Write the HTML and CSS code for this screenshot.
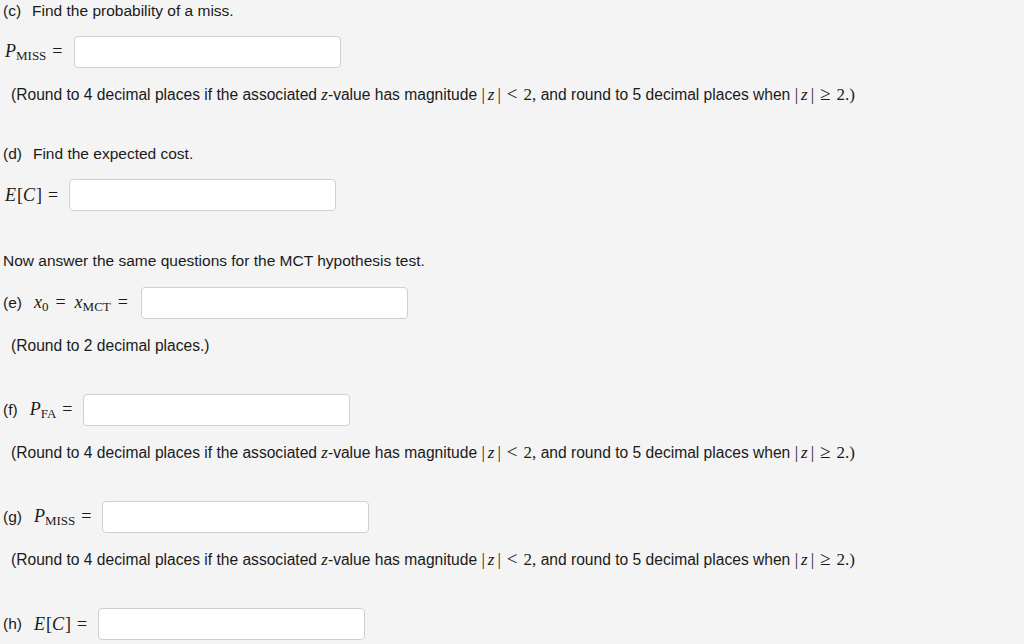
FILE: index.html
```html
<!DOCTYPE html>
<html>
<head>
<meta charset="utf-8">
<link rel="stylesheet" href="styles.css">
</head>
<body>
<div class="page">
  <p class="text first"><span class="tag">(c)</span>Find the probability of a miss.</p>
  <div class="row r-after-text">
    <span class="math lead"><i>P</i><sub>MISS</sub><span class="op">=</span></span>
    <span class="box"></span>
  </div>
  <p class="note">(Round to 4 decimal places if the associated <i class="m">z</i>-value has magnitude <span class="m">|<i>z</i>|<span class="rel">&lt;</span>2,</span> and round to 5 decimal places when <span class="m">|<i>z</i>|<span class="rel">≥</span>2.)</span></p>

  <p class="text big-gap"><span class="tag">(d)</span>Find the expected cost.</p>
  <div class="row r-after-text">
    <span class="math lead ec"><i>E</i>[<i>C</i>]<span class="op">=</span></span>
    <span class="box"></span>
  </div>

  <p class="text big-gap now">Now answer the same questions for the MCT hypothesis test.</p>
  <div class="row r-after-text2">
    <span class="tag">(e)</span>
    <span class="math xe"><i>x</i><sub class="num">0</sub><span class="op">=</span><i>x</i><sub>MCT</sub><span class="op">=</span></span>
    <span class="box"></span>
  </div>
  <p class="note">(Round to 2 decimal places.)</p>

  <div class="row big-gap">
    <span class="tag">(f)</span>
    <span class="math"><i>P</i><sub>FA</sub><span class="op">=</span></span>
    <span class="box"></span>
  </div>
  <p class="note">(Round to 4 decimal places if the associated <i class="m">z</i>-value has magnitude <span class="m">|<i>z</i>|<span class="rel">&lt;</span>2,</span> and round to 5 decimal places when <span class="m">|<i>z</i>|<span class="rel">≥</span>2.)</span></p>

  <div class="row big-gap">
    <span class="tag">(g)</span>
    <span class="math"><i>P</i><sub>MISS</sub><span class="op">=</span></span>
    <span class="box"></span>
  </div>
  <p class="note">(Round to 4 decimal places if the associated <i class="m">z</i>-value has magnitude <span class="m">|<i>z</i>|<span class="rel">&lt;</span>2,</span> and round to 5 decimal places when <span class="m">|<i>z</i>|<span class="rel">≥</span>2.)</span></p>

  <div class="row big-gap">
    <span class="tag">(h)</span>
    <span class="math ec"><i>E</i>[<i>C</i>]<span class="op">=</span></span>
    <span class="box"></span>
  </div>
</div>
</body>
</html>
```

FILE: styles.css
```css
html, body {
  margin: 0;
  padding: 0;
  background: #f4f4f4;
}
body {
  font-family: "Liberation Sans", Arial, Helvetica, sans-serif;
  font-size: 15.5px;
  color: #1a1a1a;
}
.page {
  padding: 0 0 0 3px;
  width: 1021px;
  height: 644px;
  overflow: hidden;
}
p {
  margin: 0;
}
.text {
  height: 20px;
  line-height: 22px;
}
.tag {
  display: inline-block;
  margin-right: 11px;
}
.row .tag {
  margin-right: 12px;
}
.row {
  display: flex;
  align-items: center;
  height: 32px;
}
.r-after-text {
  margin-top: 16px;
}
.r-after-text2 {
  margin-top: 17px;
}
.note {
  margin-top: 16px;
  margin-left: 8px;
  height: 20px;
  line-height: 22px;
  white-space: nowrap;
  font-size: 15.6px;
}
.big-gap {
  margin-top: 39px;
}
.math {
  font-family: "Liberation Serif", "Times New Roman", serif;
  font-size: 18px;
  margin-right: 11px;
  white-space: nowrap;
}
.math.lead {
  margin-left: 2px;
}
.math i {
  font-style: italic;
}
.math.ec i {
  margin-right: 1px;
}
.math sub {
  font-size: 13px;
  vertical-align: -3px;
  font-style: normal;
}
.math .op {
  display: inline-block;
  margin: 0 0 0 6px;
  padding-right: 6px;
}
.math .op:last-child {
  padding-right: 0;
}
.math.xe {
  margin-right: 13px;
}
.math.xe .op {
  margin-left: 7px;
  padding-right: 9px;
}
.math.xe .op:last-child {
  padding-right: 0;
}
.m {
  font-family: "Liberation Serif", "Times New Roman", serif;
  font-size: 17px;
}
.m i {
  margin: 0 3px;
}
.rel {
  display: inline-block;
  margin: 0 6px;
  font-size: 19px;
  line-height: 1;
}
.box {
  display: block;
  width: 265px;
  height: 30px;
  background: #ffffff;
  border: 1px solid #cfcfcf;
  border-radius: 4px;
}
```
